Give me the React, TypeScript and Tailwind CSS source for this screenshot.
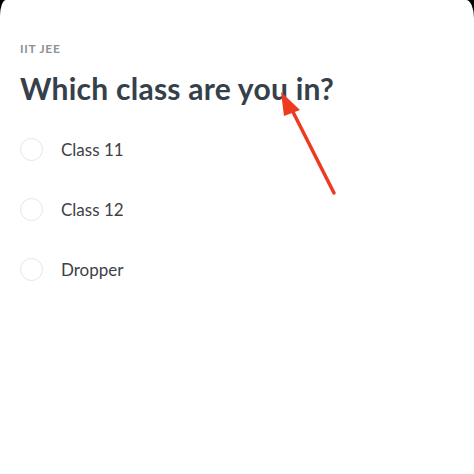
import * as React from "react";

const options = ["Class 11", "Class 12", "Dropper"];

/** Red annotation arrow pointing at the question. */
function Arrow() {
  return (
    <svg
      className="pointer-events-none absolute left-0 top-0"
      width="474"
      height="474"
      viewBox="0 0 474 474"
      aria-hidden="true"
    >
      <line x1="334" y1="193" x2="292" y2="110" stroke="#ee3a1f" strokeWidth="3.5" strokeLinecap="round" />
      <polygon points="281,92 300,110 284,116" fill="#ee3a1f" />
    </svg>
  );
}

export default function App() {
  const [selected, setSelected] = React.useState<string | null>(null);

  return (
    <div className="h-[474px] w-[474px] overflow-hidden bg-black">
      <div
        className="relative h-full w-full rounded-tl-[6px_16px] rounded-tr-[8px_18px] bg-white px-5 pt-[40px]"
        style={{ fontFamily: "Lato, 'Noto Sans', sans-serif" }}
      >
        <div className="text-[12px] font-bold tracking-[0.06em] text-[#8d9196]">IIT JEE</div>
        <h1 className="mt-[10px] text-[30px] font-bold leading-[40px] tracking-[0.25px] text-[#35404a]">
          Which class are you in?
        </h1>

        <div className="mt-[30px] flex flex-col gap-[37px]">
          {options.map((option) => (
            <button
              key={option}
              type="button"
              onClick={() => setSelected(option)}
              className="flex items-center gap-[18px] text-left"
            >
              <span
                className={
                  selected === option
                    ? "size-[23px] shrink-0 rounded-full border-[6px] border-[#35404a]"
                    : "size-[23px] shrink-0 rounded-full border border-[#e6e6e6]"
                }
              />
              <span className="text-[17px] leading-[23px] text-[#3d4247]">{option}</span>
            </button>
          ))}
        </div>

        <Arrow />
      </div>
    </div>
  );
}
